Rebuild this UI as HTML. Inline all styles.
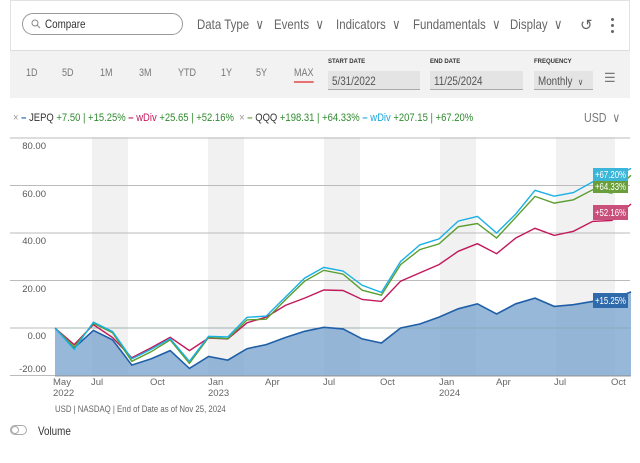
<!DOCTYPE html>
<html><head><meta charset="utf-8"><style>
*{margin:0;padding:0;box-sizing:border-box}
body{width:640px;height:463px;background:#fff;font-family:"Liberation Sans",sans-serif;color:#555;position:relative;overflow:hidden}
.a{position:absolute;white-space:nowrap}
.n{transform:scaleX(.82);transform-origin:0 0}
.top{left:10px;top:0;width:620px;height:50px;border:1px solid #e2e2e2;border-bottom:none;background:#fff}
.search{left:22px;top:13px;width:161px;height:22px;border:1px solid #999;border-radius:11px;font-size:12px;color:#333;padding:3px 0 0 22px}
.menu{top:16px;font-size:14px;color:#666}
.band{left:10px;top:50px;width:620px;height:48px;background:#f2f2f2;border-top:1px solid #ddd}
.tb{top:67px;font-size:11px;color:#777}
.lbl{top:59px;font-size:6px;font-weight:bold;color:#333}
.inp{top:71px;height:19px;background:#e4e4e4;border-bottom:1px solid #aaa;font-size:12px;color:#555;padding:3px 0 0 4px}
.leg{top:112px;font-size:11px;left:13px;color:#333}
.g{color:#2e8b2e}.r{color:#c2185b}.c{color:#1aa7dd}
.yl{font-size:9.5px;color:#555;width:40px;text-align:right;left:6px}
.xl{font-size:9.5px;color:#666;top:377px;text-align:center}
</style></head><body>
<div class="a top"></div>
<div class="a search"><span class="a n" style="left:22px;top:3px">Compare</span><svg class="a" style="left:8px;top:5px" width="10" height="10"><circle cx="4" cy="4" r="3" fill="none" stroke="#888" stroke-width="1"/><line x1="6.3" y1="6.3" x2="9" y2="9" stroke="#888"/></svg></div>
<div class="a menu n" style="left:197px">Data Type &nbsp;∨</div>
<div class="a menu n" style="left:274px">Events &nbsp;∨</div>
<div class="a menu n" style="left:336px">Indicators &nbsp;∨</div>
<div class="a menu n" style="left:413px">Fundamentals &nbsp;∨</div>
<div class="a menu n" style="left:510px">Display &nbsp;∨</div>
<div class="a menu" style="left:580px;font-size:15px">↺</div>
<div class="a" style="left:611px;top:18px;width:3px;line-height:3px;font-size:0"><div style="width:3px;height:3px;background:#666;border-radius:2px;margin-bottom:3px"></div><div style="width:3px;height:3px;background:#666;border-radius:2px;margin-bottom:3px"></div><div style="width:3px;height:3px;background:#666;border-radius:2px"></div></div>
<div class="a band"></div>
<div class="a tb n" style="left:26px">1D</div><div class="a tb n" style="left:62px">5D</div><div class="a tb n" style="left:100px">1M</div><div class="a tb n" style="left:139px">3M</div><div class="a tb n" style="left:178px">YTD</div><div class="a tb n" style="left:221px">1Y</div><div class="a tb n" style="left:256px">5Y</div>
<div class="a tb n" style="left:294px;color:#777">MAX<div style="height:2px;background:#e57373;margin-top:2px"></div></div>
<div class="a lbl" style="left:328px">START DATE</div><div class="a inp" style="left:328px;width:92px"><span class="n" style="display:inline-block">5/31/2022</span></div>
<div class="a lbl" style="left:430px">END DATE</div><div class="a inp" style="left:430px;width:93px"><span class="n" style="display:inline-block">11/25/2024</span></div>
<div class="a lbl" style="left:534px">FREQUENCY</div><div class="a inp" style="left:534px;width:59px"><span class="n" style="display:inline-block">Monthly &nbsp;<span style="font-size:9px">∨</span></span></div>
<div class="a" style="left:604px;top:70px;font-size:13px;color:#777">☰</div>
<div class="a leg n" style="transform:scaleX(.86)"><span style="color:#999">×</span> <b style="color:#1f5fa8">–</b> JEPQ <span class="g">+7.50 | +15.25%</span> <b class="r">–</b> <span class="r">wDiv</span> <span class="g">+25.65 | +52.16%</span> &nbsp;<span style="color:#999">×</span> <b style="color:#5a9e2f">–</b> QQQ <span class="g">+198.31 | +64.33%</span> <b class="c">–</b> <span class="c">wDiv</span> <span class="g">+207.15 | +67.20%</span></div>
<div class="a n" style="left:584px;top:110px;font-size:13px;color:#777">USD &nbsp;∨</div>
<svg class="a" style="left:0;top:0" width="640" height="400" id="ch"></svg>
<div class="a yl" style="top:141px">80.00</div><div class="a yl" style="top:189px">60.00</div><div class="a yl" style="top:236px">40.00</div><div class="a yl" style="top:284px">20.00</div><div class="a yl" style="top:331px">0.00</div><div class="a yl" style="top:364px">-20.00</div>
<div class="a xl" style="left:53px;text-align:left">May<br>2022</div><div class="a xl" style="left:91px">Jul</div><div class="a xl" style="left:150px">Oct</div><div class="a xl" style="left:208px;text-align:left">Jan<br>2023</div><div class="a xl" style="left:265px">Apr</div><div class="a xl" style="left:323px">Jul</div><div class="a xl" style="left:380px">Oct</div><div class="a xl" style="left:439px;text-align:left">Jan<br>2024</div><div class="a xl" style="left:496px">Apr</div><div class="a xl" style="left:554px">Jul</div><div class="a xl" style="left:611px">Oct</div>
<div class="a n" style="left:55px;top:404px;font-size:9.5px;color:#666">USD | NASDAQ | End of Date as of Nov 25, 2024</div>
<div class="a" style="left:10px;top:425px;width:17px;height:10px;border:1px solid #aaa;border-radius:5px"><div style="width:8px;height:8px;border-radius:4px;border:1px solid #aaa;background:#fff"></div></div>
<div class="a n" style="left:38px;top:424px;font-size:12px;color:#333">Volume</div>
<script>
var X=i=>55+i*19.2,Y=v=>328-v*2.375;
var J=[0,-8.4,-1,-5,-15.6,-13,-9.5,-17,-12,-13.5,-8.7,-7,-4,-1.4,0.3,-0.4,-4.6,-6.3,0,1.7,4.6,8.1,10.2,5.9,10.2,12.6,9.1,9.8,11.2,11.9,15.2];
var R=[0,-7,1.4,-4,-12.5,-8.4,-3.9,-9.5,-4.2,-4.6,2.2,4.6,9.5,12.6,16,15.8,12,11.2,19.7,23.2,26.7,32.3,35.5,31.3,37.9,42,39,40.7,44.9,45.3,52.2];
var G=[0,-8,2,-2,-14,-10,-5,-14.9,-4,-4.5,3.4,3.7,11.9,19.7,24.3,22.7,15.9,13.8,26.7,33,35.4,42.6,44,37.9,46.6,55.4,52.6,54,58.2,56.8,64.3];
var C=[0,-9,2.5,-1.5,-13,-9,-4.5,-14,-3.5,-3.8,4.5,5,13,21,25.5,24,18,15,28,35,37.5,45,47,40,48,58,55.5,57,61.5,63,67.2];
var pts=a=>a.map((v,i)=>X(i).toFixed(1)+','+Y(v).toFixed(1)).join(' ');
var s='';
[[92,128],[208,244],[324,360],[440,476],[556,615]].forEach(b=>s+='<rect x="'+b[0]+'" y="137" width="'+(b[1]-b[0])+'" height="239" fill="#f1f1f1"/>');
[80,60,40,20,0,-20].forEach(v=>s+='<line x1="10" x2="630" y1="'+Y(v)+'" y2="'+Y(v)+'" stroke="#bbb" stroke-width="1"/>');
s+='<polygon points="'+X(0)+',376 '+pts(J)+' '+X(30)+',376" fill="#7ea6d0" fill-opacity="0.8"/>';
s+='<line x1="55" x2="631" y1="328" y2="328" stroke="#8aa" stroke-opacity=".5"/>';
s+='<polyline points="'+pts(J)+'" fill="none" stroke="#1f5fa8" stroke-width="1.6"/>';
s+='<polyline points="'+pts(R)+'" fill="none" stroke="#c2185b" stroke-width="1.4"/>';
s+='<polyline points="'+pts(G)+'" fill="none" stroke="#5a9e2f" stroke-width="1.4"/>';
s+='<polyline points="'+pts(C)+'" fill="none" stroke="#1ab0e6" stroke-width="1.4"/>';
function lab(y,h,c,t){s+='<rect x="593" y="'+y+'" width="35" height="'+h+'" fill="'+c+'"/><text x="610.5" y="'+(y+h/2+3.5)+'" font-size="10" fill="#fff" text-anchor="middle" textLength="31" lengthAdjust="spacingAndGlyphs" font-family="Liberation Sans,sans-serif">'+t+'</text>';}
lab(180,13,'#6a9e3a','+64.33%');lab(168,13,'#3bb5d8','+67.20%');lab(205,15,'#c8507a','+52.16%');lab(293,15,'#2f6aab','+15.25%');
s+='<line x1="55" x2="631" y1="376" y2="376" stroke="#999"/>';
document.getElementById('ch').innerHTML=s;
</script>
</body></html>
